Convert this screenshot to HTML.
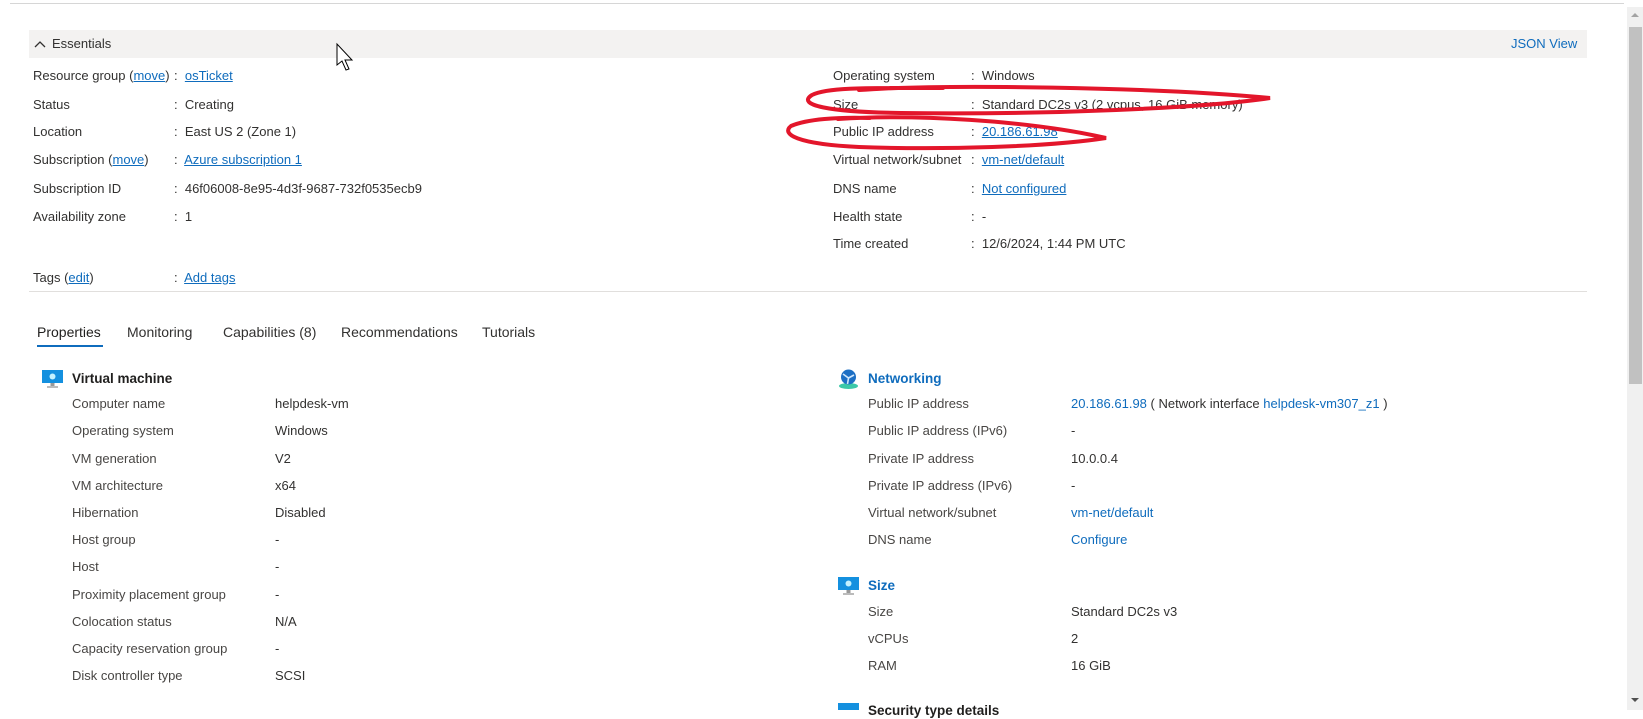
<!DOCTYPE html>
<html><head><meta charset="utf-8"><style>
body{margin:0;width:1643px;height:710px;overflow:hidden;background:#fff;font-family:"Liberation Sans",sans-serif;font-size:13px;color:#323130;position:relative}
.a{position:absolute;white-space:nowrap;line-height:16px}
.g{color:#484644}
.k{color:#0f6cbd;text-decoration:underline}
.b{color:#0f6cbd}
.h{font-weight:bold;font-size:13.5px}
.t{font-size:14px}
</style></head><body>
<div class="a" style="left:10px;top:3px;width:1614px;height:1px;background:#d6d6d6"></div>
<div class="a" style="left:29px;top:30px;width:1558px;height:28px;background:#f3f2f1"></div>
<svg class="a" style="left:34px;top:40px" width="12" height="8"><path d="M1 7 L6 2 L11 7" fill="none" stroke="#323130" stroke-width="1.3"/></svg>
<div class="a" style="left:52px;top:36px">Essentials</div>
<div class="a b" style="left:1511px;top:36px">JSON View</div>

<div class="a" style="left:33px;top:68px">Resource group (<span class="k">move</span>)</div><div class="a" style="left:174px;top:68px">:&nbsp; <span class="k">osTicket</span></div>
<div class="a" style="left:33px;top:97px">Status</div><div class="a" style="left:174px;top:97px">:&nbsp; Creating</div>
<div class="a" style="left:33px;top:124px">Location</div><div class="a" style="left:174px;top:124px">:&nbsp; East US 2 (Zone 1)</div>
<div class="a" style="left:33px;top:152px">Subscription (<span class="k">move</span>)</div><div class="a" style="left:174px;top:152px">:&nbsp; <span class="k">Azure subscription 1</span></div>
<div class="a" style="left:33px;top:181px">Subscription ID</div><div class="a" style="left:174px;top:181px">:&nbsp; 46f06008-8e95-4d3f-9687-732f0535ecb9</div>
<div class="a" style="left:33px;top:209px">Availability zone</div><div class="a" style="left:174px;top:209px">:&nbsp; 1</div>
<div class="a" style="left:33px;top:270px">Tags (<span class="k">edit</span>)</div><div class="a" style="left:174px;top:270px">:&nbsp; <span class="k">Add tags</span></div>

<div class="a" style="left:833px;top:68px">Operating system</div><div class="a" style="left:971px;top:68px">:&nbsp; Windows</div>
<div class="a" style="left:833px;top:97px">Size</div><div class="a" style="left:971px;top:97px">:&nbsp; Standard DC2s v3 (2 vcpus, 16 GiB memory)</div>
<div class="a" style="left:833px;top:124px">Public IP address</div><div class="a" style="left:971px;top:124px">:&nbsp; <span class="k">20.186.61.98</span></div>
<div class="a" style="left:833px;top:152px">Virtual network/subnet</div><div class="a" style="left:971px;top:152px">:&nbsp; <span class="k">vm-net/default</span></div>
<div class="a" style="left:833px;top:181px">DNS name</div><div class="a" style="left:971px;top:181px">:&nbsp; <span class="k">Not configured</span></div>
<div class="a" style="left:833px;top:209px">Health state</div><div class="a" style="left:971px;top:209px">:&nbsp; -</div>
<div class="a" style="left:833px;top:236px">Time created</div><div class="a" style="left:971px;top:236px">:&nbsp; 12/6/2024, 1:44 PM UTC</div>

<svg class="a" style="left:0;top:0" width="1643" height="710"><g fill="none" stroke="#e3162b" stroke-width="4" stroke-linecap="round">
<path d="M859 90 C 943 84, 1153 87, 1270 98 C 1205 108, 1048 115, 901 113 C 828 112, 796 105, 812 95 C 828 87, 870 88, 943 88"/>
<path d="M838 119 C 912 114, 1027 120, 1106 138 C 1048 147, 943 150, 859 147 C 796 144, 781 134, 791 126 C 807 119, 838 117, 870 118"/>
</g>
<path d="M337 44 L337 65 L342 61 L346 70 L349 69 L345 60 L352 60 Z" fill="#fff" stroke="#000" stroke-width="1"/>
</svg>

<div class="a" style="left:29px;top:291px;width:1558px;height:1px;background:#e1dfdd"></div>
<div class="a t" style="left:37px;top:324px;color:#201f1e">Properties</div>
<div class="a" style="left:37px;top:345px;width:66px;height:2px;background:#0f6cbd"></div>
<div class="a t" style="left:127px;top:324px">Monitoring</div>
<div class="a t" style="left:223px;top:324px">Capabilities (8)</div>
<div class="a t" style="left:341px;top:324px">Recommendations</div>
<div class="a t" style="left:482px;top:324px">Tutorials</div>

<svg class="a" style="left:42px;top:370px" width="21" height="18"><rect x="0" y="0" width="21" height="13" fill="#1490df"/><circle cx="10.5" cy="6.5" r="3" fill="#c3f1ff"/><rect x="8.5" y="13" width="4" height="3" fill="#999"/><rect x="5" y="16" width="11" height="2" fill="#bbb"/></svg>
<div class="a h" style="left:72px;top:371px;color:#201f1e">Virtual machine</div>
<div class="a g" style="left:72px;top:396px">Computer name</div><div class="a" style="left:275px;top:396px">helpdesk-vm</div>
<div class="a g" style="left:72px;top:423px">Operating system</div><div class="a" style="left:275px;top:423px">Windows</div>
<div class="a g" style="left:72px;top:451px">VM generation</div><div class="a" style="left:275px;top:451px">V2</div>
<div class="a g" style="left:72px;top:478px">VM architecture</div><div class="a" style="left:275px;top:478px">x64</div>
<div class="a g" style="left:72px;top:505px">Hibernation</div><div class="a" style="left:275px;top:505px">Disabled</div>
<div class="a g" style="left:72px;top:532px">Host group</div><div class="a" style="left:275px;top:532px">-</div>
<div class="a g" style="left:72px;top:559px">Host</div><div class="a" style="left:275px;top:559px">-</div>
<div class="a g" style="left:72px;top:587px">Proximity placement group</div><div class="a" style="left:275px;top:587px">-</div>
<div class="a g" style="left:72px;top:614px">Colocation status</div><div class="a" style="left:275px;top:614px">N/A</div>
<div class="a g" style="left:72px;top:641px">Capacity reservation group</div><div class="a" style="left:275px;top:641px">-</div>
<div class="a g" style="left:72px;top:668px">Disk controller type</div><div class="a" style="left:275px;top:668px">SCSI</div>

<svg class="a" style="left:838px;top:369px" width="21" height="20"><ellipse cx="10.5" cy="17" rx="9.5" ry="3" fill="#3cc8a8"/><circle cx="10.5" cy="8" r="7.5" fill="#1d6fc4"/><path d="M5 5 L10.5 9 L16 6 M10.5 9 L9.5 15" stroke="#cfe6fb" stroke-width="1.6" fill="none"/></svg>
<div class="a h b" style="left:868px;top:371px">Networking</div>
<div class="a g" style="left:868px;top:396px">Public IP address</div><div class="a" style="left:1071px;top:396px"><span class="b">20.186.61.98</span> ( Network interface <span class="b">helpdesk-vm307_z1</span> )</div>
<div class="a g" style="left:868px;top:423px">Public IP address (IPv6)</div><div class="a" style="left:1071px;top:423px">-</div>
<div class="a g" style="left:868px;top:451px">Private IP address</div><div class="a" style="left:1071px;top:451px">10.0.0.4</div>
<div class="a g" style="left:868px;top:478px">Private IP address (IPv6)</div><div class="a" style="left:1071px;top:478px">-</div>
<div class="a g" style="left:868px;top:505px">Virtual network/subnet</div><div class="a b" style="left:1071px;top:505px">vm-net/default</div>
<div class="a g" style="left:868px;top:532px">DNS name</div><div class="a b" style="left:1071px;top:532px">Configure</div>

<svg class="a" style="left:838px;top:577px" width="21" height="18"><rect x="0" y="0" width="21" height="13" fill="#1490df"/><circle cx="10.5" cy="6.5" r="3" fill="#c3f1ff"/><rect x="8.5" y="13" width="4" height="3" fill="#999"/><rect x="5" y="16" width="11" height="2" fill="#bbb"/></svg>
<div class="a h b" style="left:868px;top:578px">Size</div>
<div class="a g" style="left:868px;top:604px">Size</div><div class="a" style="left:1071px;top:604px">Standard DC2s v3</div>
<div class="a g" style="left:868px;top:631px">vCPUs</div><div class="a" style="left:1071px;top:631px">2</div>
<div class="a g" style="left:868px;top:658px">RAM</div><div class="a" style="left:1071px;top:658px">16 GiB</div>
<svg class="a" style="left:838px;top:703px" width="21" height="7"><rect x="0" y="0" width="21" height="7" fill="#1490df"/></svg>
<div class="a h" style="left:868px;top:703px;color:#201f1e">Security type details</div>

<div class="a" style="left:1627px;top:7px;width:16px;height:703px;background:#f0f0f0"></div>
<div class="a" style="left:1629px;top:27px;width:13px;height:357px;background:#c1c1c1"></div>
<svg class="a" style="left:1630px;top:12px" width="10" height="6"><path d="M1 5 L5 1 L9 5Z" fill="#a3a3a3"/></svg>
<svg class="a" style="left:1630px;top:697px" width="10" height="6"><path d="M1 1 L5 5 L9 1Z" fill="#505050"/></svg>
</body></html>
